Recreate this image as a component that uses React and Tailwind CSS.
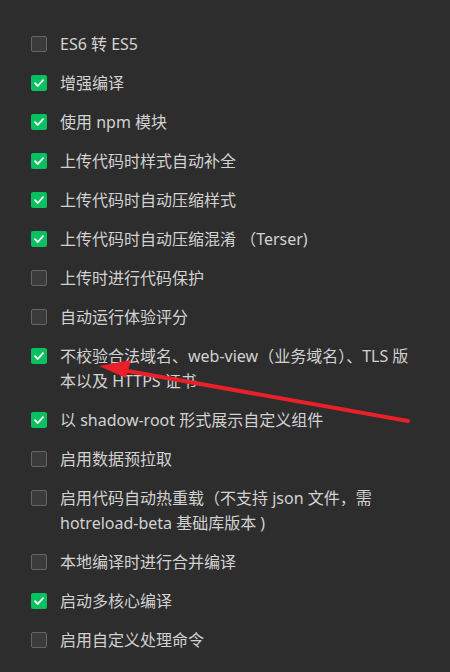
import React from "react";

const options = [
  { label: "ES6 转 ES5", checked: false },
  { label: "增强编译", checked: true },
  { label: "使用 npm 模块", checked: true },
  { label: "上传代码时样式自动补全", checked: true },
  { label: "上传代码时自动压缩样式", checked: true },
  { label: "上传代码时自动压缩混淆 （Terser)", checked: true },
  { label: "上传时进行代码保护", checked: false },
  { label: "自动运行体验评分", checked: false },
  { label: "不校验合法域名、web-view（业务域名）、TLS 版本以及 HTTPS 证书", checked: true },
  { label: "以 shadow-root 形式展示自定义组件", checked: true },
  { label: "启用数据预拉取", checked: false },
  { label: "启用代码自动热重载（不支持 json 文件，需 hotreload-beta 基础库版本 )", checked: false },
  { label: "本地编译时进行合并编译", checked: false },
  { label: "启动多核心编译", checked: true },
  { label: "启用自定义处理命令", checked: false },
];

function Checkbox({ checked }) {
  if (checked) {
    return (
      <span className="mt-[4px] flex h-[16px] w-[16px] shrink-0 items-center justify-center rounded-[2px] bg-[#07c160]">
        <svg width="12" height="12" viewBox="0 0 12 12" fill="none">
          <path d="M2 6.2 L4.8 9 L10 3.2" stroke="white" strokeWidth="1.8" strokeLinecap="round" strokeLinejoin="round" />
        </svg>
      </span>
    );
  }
  return (
    <span className="mt-[4px] h-[16px] w-[16px] shrink-0 rounded-[2px] border border-[#666] bg-[#3b3b3b]" />
  );
}

export default function App() {
  return (
    <div
      className="relative h-[672px] w-[450px] overflow-hidden bg-[#2d2d2d] pl-[31px] pr-[30px] pt-[32px] text-[16px] leading-[25px] text-[#d2d2d2]"
      style={{ fontFamily: '"Noto Sans", "Noto Sans CJK SC", sans-serif' }}
    >
      <div className="flex flex-col gap-[14px]">
        {options.map((o) => (
          <label key={o.label} className="flex items-start gap-[13px]">
            <Checkbox checked={o.checked} />
            <span>{o.label}</span>
          </label>
        ))}
      </div>

      {/* red annotation arrow */}
      <svg className="absolute left-0 top-0" width="450" height="672" viewBox="0 0 450 672">
        <line x1="408" y1="421" x2="122" y2="370" stroke="#e8202a" strokeWidth="4" strokeLinecap="round" />
        <polygon points="99,366 131,360 126,378" fill="#e8202a" />
      </svg>
    </div>
  );
}
